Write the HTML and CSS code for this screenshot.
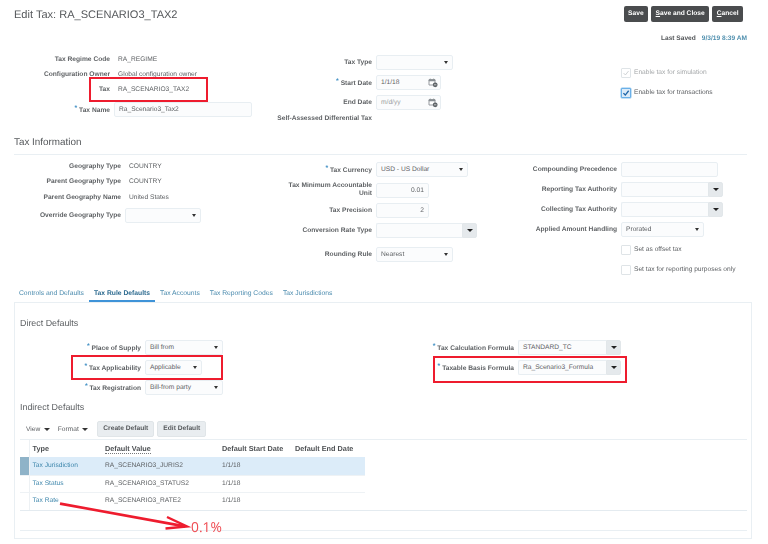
FILE: index.html
```html
<!DOCTYPE html>
<html lang="en">
<head>
<meta charset="utf-8">
<title>Edit Tax</title>
<link rel="stylesheet" href="styles.css">
</head>
<body>
<div class="page">
  <header class="header">
    <h1 class="title">Edit Tax: RA_SCENARIO3_TAX2</h1>
    <div class="actions">
      <div class="buttons">
        <span class="dark-btn">Save</span>
        <span class="dark-btn"><u>S</u>ave and Close</span>
        <span class="dark-btn"><u>C</u>ancel</span>
      </div>
      <div class="saved"><b>Last Saved</b><span class="saved-date">9/3/19 8:39 AM</span></div>
    </div>
  </header>

  <section class="form-top">
    <div class="fields fields-a">
      <div class="field"><label>Tax Regime Code</label><span class="val">RA_REGIME</span></div>
      <div class="field"><label>Configuration Owner</label><span class="val">Global configuration owner</span></div>
      <div class="field"><label>Tax</label><span class="val">RA_SCENARIO3_TAX2</span></div>
      <div class="field push5"><label><i>*</i> Tax Name</label><span class="ctl w138">Ra_Scenario3_Tax2</span></div>
    </div>
    <div class="fields fields-b">
      <div class="field"><label>Tax Type</label><span class="ctl sel w77"></span></div>
      <div class="field"><label><i>*</i> Start Date</label><span class="ctl w65">1/1/18<svg class="cal" viewBox="0 0 10 10"><path d="M1 2.5h6v5H1z" fill="#fff" stroke="#8a8f94" stroke-width=".9"/><path d="M1 2h6v1.4H1zM2.3 1v1.4M5.6 1v1.4" fill="#8a8f94" stroke="#8a8f94" stroke-width=".7"/><circle cx="7.2" cy="7.3" r="2.4" fill="#5f6468"/><path d="M6 7.3h2.4" stroke="#fff" stroke-width=".6"/></svg></span></div>
      <div class="field"><label>End Date</label><span class="ctl w65 hint">m/d/yy<svg class="cal" viewBox="0 0 10 10"><path d="M1 2.5h6v5H1z" fill="#fff" stroke="#8a8f94" stroke-width=".9"/><path d="M1 2h6v1.4H1zM2.3 1v1.4M5.6 1v1.4" fill="#8a8f94" stroke="#8a8f94" stroke-width=".7"/><circle cx="7.2" cy="7.3" r="2.4" fill="#5f6468"/><path d="M6 7.3h2.4" stroke="#fff" stroke-width=".6"/></svg></span></div>
      <div class="field pull4"><label class="nowrap">Self-Assessed Differential Tax</label></div>
    </div>
    <div class="checks checks-top">
      <div class="check off"><span class="box"><svg viewBox="0 0 9 9"><path d="M1.8 4.6l2 2.1 3.6-4.4" fill="none" stroke="#c9cdd0" stroke-width="1"/></svg></span>Enable tax for simulation</div>
      <div class="check"><span class="box on"><svg viewBox="0 0 9 9"><path d="M1.6 4.6l2.1 2.2 3.8-4.8" fill="none" stroke="#1f66a8" stroke-width="1.5"/></svg></span>Enable tax for transactions</div>
    </div>
  </section>

  <h2 class="section-title">Tax Information</h2>

  <section class="form-info">
    <div class="fields fields-c">
      <div class="field"><label>Geography Type</label><span class="val">COUNTRY</span></div>
      <div class="field"><label>Parent Geography Type</label><span class="val">COUNTRY</span></div>
      <div class="field push1"><label>Parent Geography Name</label><span class="val">United States</span></div>
      <div class="field push3"><label>Override Geography Type</label><span class="ctl sel w76"></span></div>
    </div>
    <div class="fields fields-b gap5">
      <div class="field"><label><i>*</i> Tax Currency</label><span class="ctl sel w92">USD - US Dollar</span></div>
      <div class="field"><label class="two">Tax Minimum Accountable Unit</label><span class="ctl num w53">0.01</span></div>
      <div class="field"><label>Tax Precision</label><span class="ctl num w53">2</span></div>
      <div class="field"><label>Conversion Rate Type</label><span class="combo w101"><span class="ctl"></span><span class="drop"></span></span></div>
      <div class="field push4"><label>Rounding Rule</label><span class="ctl sel w77">Nearest</span></div>
    </div>
    <div class="fields fields-d gap5">
      <div class="field"><label>Compounding Precedence</label><span class="ctl w97"></span></div>
      <div class="field"><label>Reporting Tax Authority</label><span class="combo w102"><span class="ctl"></span><span class="drop"></span></span></div>
      <div class="field"><label>Collecting Tax Authority</label><span class="combo w102"><span class="ctl"></span><span class="drop"></span></span></div>
      <div class="field"><label>Applied Amount Handling</label><span class="ctl sel w83">Prorated</span></div>
      <div class="check indent"><span class="box"></span>Set as offset tax</div>
      <div class="check indent"><span class="box"></span>Set tax for reporting purposes only</div>
    </div>
  </section>

  <nav class="tabs">
    <a class="tab">Controls and Defaults</a>
    <a class="tab active">Tax Rule Defaults</a>
    <a class="tab">Tax Accounts</a>
    <a class="tab">Tax Reporting Codes</a>
    <a class="tab">Tax Jurisdictions</a>
  </nav>

  <section class="panel">
    <h3 class="panel-title">Direct Defaults</h3>
    <div class="direct">
      <div class="fields fields-e gap5">
        <div class="field"><label><i>*</i> Place of Supply</label><span class="ctl sel w78">Bill from</span></div>
        <div class="field"><label><i>*</i> Tax Applicability</label><span class="ctl sel w57">Applicable</span></div>
        <div class="field"><label><i>*</i> Tax Registration</label><span class="ctl sel w78">Bill-from party</span></div>
      </div>
      <div class="fields fields-f gap5">
        <div class="field"><label><i>*</i> Tax Calculation Formula</label><span class="combo w103"><span class="ctl">STANDARD_TC</span><span class="drop"></span></span></div>
        <div class="field"><label><i>*</i> Taxable Basis Formula</label><span class="combo w103"><span class="ctl">Ra_Scenario3_Formula</span><span class="drop"></span></span></div>
      </div>
    </div>
    <h3 class="panel-title second">Indirect Defaults</h3>
    <div class="toolbar">
      <span class="menu">View<b class="tri"></b></span>
      <span class="menu">Format<b class="tri"></b></span>
      <span class="light-btn first">Create Default</span>
      <span class="light-btn">Edit Default</span>
    </div>
    <div class="table-wrap">
      <table class="grid">
        <thead>
          <tr><th class="mark"></th><th class="c1">Type</th><th class="c2"><span class="sort">Default Value</span></th><th class="c3">Default Start Date</th><th class="c4">Default End Date</th></tr>
        </thead>
        <tbody>
          <tr class="selected r18"><td class="mark"></td><td><a>Tax Jurisdiction</a></td><td>RA_SCENARIO3_JURIS2</td><td>1/1/18</td><td></td></tr>
          <tr class="r17"><td class="mark"></td><td><a>Tax Status</a></td><td>RA_SCENARIO3_STATUS2</td><td>1/1/18</td><td></td></tr>
          <tr class="r18 last"><td class="mark"></td><td><a>Tax Rate</a></td><td>RA_SCENARIO3_RATE2</td><td>1/1/18</td><td></td></tr>
        </tbody>
      </table>
    </div>
    <div class="table-foot"></div>
  </section>

  <span class="callout tax-box"></span>
  <span class="callout appl-box"></span>
  <span class="callout basis-box"></span>
  <svg class="arrow" viewBox="0 0 768 544" aria-hidden="true">
    <path d="M60 503.6L185 526.4" fill="none" stroke="#ee1c2e" stroke-width="2.6"/>
    <path d="M167 517L187 526.5L165.5 528.5" fill="none" stroke="#ee1c2e" stroke-width="2.4"/>
  </svg>
  <span class="note">0.1%</span>
</div>
</body>
</html>
```
FILE: styles.css
```css
* { box-sizing: border-box; }
html, body { margin: 0; padding: 0; background: #fff; }
.page {
  position: relative;
  width: 768px;
  height: 544px;
  overflow: hidden;
  font: 6.65px/1.15 "Liberation Sans", Arial, sans-serif;
  text-rendering: geometricPrecision;
  color: #5c5f62;
  filter: blur(0.45px);
}
.header { height: 51px; display: flex; justify-content: space-between; }
.title { margin: 8px 0 0 14px; font-size: 11.05px; line-height: 14px; font-weight: 400; color: #55585b; }
.actions { margin-right: 21px; display: flex; flex-direction: column; align-items: flex-end; }
.buttons { display: flex; gap: 3px; margin: 6px 4px 0 0; }
.dark-btn {
  height: 16px; padding: 0 4.5px; display: flex; align-items: center;
  background: #4a4c4e; color: #fff; font-weight: 700; border-radius: 2px; white-space: pre;
}
.saved { margin-top: 13px; display: flex; gap: 6px; font-size: 6.6px; }
.saved b { color: #55585b; }
.saved-date { color: #4f8fae; font-weight: 700; }

.form-top { display: grid; grid-template-columns: 260px 361px 1fr; height: 81px; }
.form-info { display: grid; grid-template-columns: 260px 361px 1fr; height: 122px; }
.fields { display: flex; flex-direction: column; }
.gap5 { gap: 5px; padding-top: 7px; }
.fields-a { --label: 110px; padding-top: 1px; }
.fields-b { --label: 112px; gap: 5px; padding-top: 4px; }
.fields-b.gap5 { padding-top: 7px; }
.fields-c { --label: 121px; padding-top: 4px; }
.fields-d { --label: 352px; margin-left: -356px; }
.fields-e { --label: 121px; width: 300px; padding-top: 0; }
.fields-f { --label: 194px; padding-top: 0; }
.field {
  display: grid;
  grid-template-columns: var(--label) auto;
  justify-content: start;
  justify-items: start;
  align-items: center;
  column-gap: 4px;
  min-height: 15px;
}
.field label { font-weight: 700; color: #5f6265; text-align: right; justify-self: end; }
.field label i { color: #3f8fc4; font-style: normal; font-size: 7px; vertical-align: 2px; }
.field label.nowrap { white-space: nowrap; }
.field label.two { line-height: 8px; width: 90px; }
.val { padding-left: 4px; white-space: nowrap; color: #5e6164; }
.push5 { margin-top: 5px; }
.push4 { margin-top: 4px; }
.push3 { margin-top: 3px; }
.push1 { margin-top: 1px; }
.pull4 { margin-top: -4px; }

.ctl {
  position: relative;
  display: block;
  height: 15px; line-height: 14px;
  padding: 0 4px;
  background: #fbfcfd;
  border: 1px solid #e8eef2;
  border-radius: 2px;
  color: #5e6164;
  white-space: nowrap;
}
.hint { color: #9a9da0; }
.num { text-align: right; }
.sel::after {
  content: ""; position: absolute; right: 4px; top: 5px;
  border: 2.5px solid transparent; border-top: 3px solid #333; border-bottom: 0;
}
.cal { position: absolute; right: 2px; top: 1px; width: 10px; height: 11px; }
.w138 { width: 138px; } .w77 { width: 77px; } .w65 { width: 65px; } .w76 { width: 76px; }
.w92 { width: 92px; } .w53 { width: 53px; } .w97 { width: 97px; } .w83 { width: 83px; }
.w78 { width: 78px; } .w57 { width: 57px; }
.combo { display: flex; height: 15px; }
.w101 { width: 101px; } .w102 { width: 102px; } .w103 { width: 103px; }
.combo .ctl { flex: 1; border-right: 0; border-radius: 2px 0 0 2px; }
.drop {
  position: relative; width: 15px; height: 15px;
  background: #e5e9ec; border: 1px solid #e2e7ea; border-radius: 0 2px 2px 0;
}
.drop::after {
  content: ""; position: absolute; left: 3.5px; top: 5px;
  border: 3px solid transparent; border-top: 3.5px solid #222; border-bottom: 0;
}

.checks-top { display: flex; flex-direction: column; gap: 5px; padding-top: 14px; }
.check { display: flex; align-items: center; gap: 3px; height: 15px; color: #5e6164; white-space: nowrap; }
.check.off { color: #a5a8aa; }
.box {
  width: 10px; height: 10px; background: #fff; border: 1px solid #dfe4e7; border-radius: 1px;
  display: block; flex: none;
}
.box svg { display: block; width: 8px; height: 8px; }
.box.on { background: #dcebf8; border-color: #6ab0e8; box-shadow: 0 0 0 .5px #8cc4ee; }
.check.indent { margin-left: 356px; }

.section-title {
  margin: 0 21px 0 14px; height: 23px; padding-top: 5px;
  font-size: 9.9px; line-height: 12px; font-weight: 400; color: #55585b;
  border-bottom: 1px solid #e9eff3;
}
.tabs { display: flex; gap: 0; height: 25px; padding: 7px 0 0 14px; font-size: 6.75px; }
.tab { padding: 6px 5px 0; height: 18px; color: #4b8bae; white-space: nowrap; }
.tab.active { color: #2c6a8f; font-weight: 700; border-bottom: 2px solid #3f93d8; }

.panel {
  width: 738px; height: 237px; margin-left: 14px; padding: 13px 0 0 5px;
  border: 1px solid #e9eff3;
}
.panel-title { margin: 0; height: 14px; font-size: 8.9px; line-height: 14px; font-weight: 400; color: #5e6164; }
.panel-title.second { margin-top: 5px; }
.direct { display: flex; margin-top: 10px; }
.toolbar { display: flex; align-items: center; height: 16px; margin-top: 7px; padding-left: 6px; gap: 8px; }
.menu { color: #5e6164; display: flex; align-items: center; gap: 3.5px; padding-top: 1px; }
.tri { display: block; border: 3px solid transparent; border-top: 3.5px solid #333; border-bottom: 0; }
.light-btn {
  height: 16px; padding: 0 5px; display: flex; align-items: center;
  background: #e9edf0; border: 1px solid #e0e5e8; border-radius: 2px;
  font-weight: 700; color: #55585b; margin-left: -5px;
}
.light-btn.first { margin-left: 1px; }

.table-wrap {
  width: 727px; margin-top: 2px;
  border-top: 1px solid #e9eff3; border-bottom: 1px solid #e4ebf0;
}
.grid { border-collapse: collapse; table-layout: fixed; width: 345px; }
.grid th { height: 17px; padding: 1px 0 0 3px; text-align: left; font-size: 7.3px; font-weight: 700; color: #4d5053; white-space: nowrap; }
.grid td { padding: 0 0 0 3px; white-space: nowrap; border-bottom: 1px solid #eef2f5; }
.grid .mark { width: 9px; padding: 0; border-right: 1px solid #edf1f4; }
.grid .c1 { width: 73px; } .grid .c2 { width: 117px; } .grid .c3, .grid .c4 { width: 73px; }
.grid a { color: #3f87ac; }
.sort { border-bottom: 1px dotted #77797b; }
.r18 { height: 18px; } .r17 { height: 17px; }
.grid tr.last td { border-bottom: 0; }
.selected td { background: #dcecf9; }
.selected .mark { background: #8fb3c8; }
.table-foot { width: 727px; height: 20px; border-bottom: 1px solid #e9eff3; }

.callout { position: absolute; border: 2px solid #ee1c2e; }
.tax-box { left: 89px; top: 77px; width: 119px; height: 25px; }
.appl-box { left: 71px; top: 355px; width: 152px; height: 25px; }
.basis-box { left: 433px; top: 356px; width: 194px; height: 27px; }
.arrow { position: absolute; left: 0; top: 0; width: 768px; height: 544px; pointer-events: none; }
.note { position: absolute; left: 191px; top: 520px; font: 13.8px/16px "Open Sans", sans-serif; color: #ef4a50; }
```
